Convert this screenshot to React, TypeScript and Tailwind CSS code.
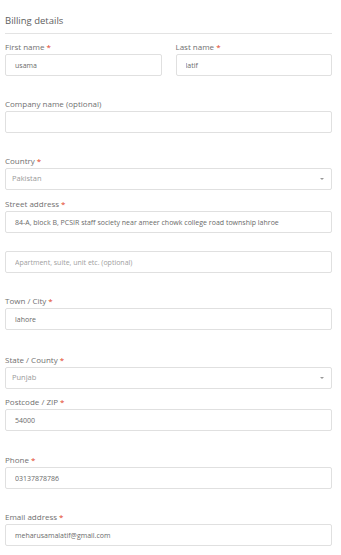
import { ReactNode } from "react";

// ─── Pieces ───────────────────────────────────────────────────────────────────

function Label({ children, required }: { children: ReactNode; required?: boolean }) {
  return (
    <label className="block h-[12px] mb-[1px] text-[8px] leading-[12px] text-[#707070] whitespace-nowrap">
      {children}
      {required && <span className="ml-[2px] text-[#e2401c]">*</span>}
    </label>
  );
}

function TextInput({ value, placeholder }: { value?: string; placeholder?: string }) {
  return (
    <input
      type="text"
      defaultValue={value}
      placeholder={placeholder}
      className="block w-full h-[22px] px-[9px] rounded-[2px] border border-[#e0e0e0] bg-white text-[7px] text-[#6a6a6a] placeholder:text-[#a0a0a0] outline-none"
    />
  );
}

function SelectBox({ value }: { value: string }) {
  return (
    <div className="flex items-center justify-between h-[22px] pl-[6px] pr-[7px] rounded-[2px] border border-[#e0e0e0] bg-white">
      <span className="text-[7.5px] text-[#9a9a9a]">{value}</span>
      <span className="w-0 h-0 border-l-[2px] border-r-[2px] border-t-[2px] border-l-transparent border-r-transparent border-t-[#999]" />
    </div>
  );
}

// ─── Page ─────────────────────────────────────────────────────────────────────

export default function App() {
  return (
    <div
      className="w-[341px] min-h-[555px] bg-white pl-[5px] pr-[9px] pt-[14px]"
      style={{ fontFamily: '"Open Sans", "Liberation Sans", sans-serif' }}
    >
      <h3 className="text-[9.5px] leading-[14px] text-[#5e5e5e] pb-[5px] border-b border-[#e3e3e3]">
        Billing details
      </h3>

      {/* Name row */}
      <div className="grid grid-cols-2 gap-[14px] mt-[7px]">
        <div>
          <Label required>First name</Label>
          <TextInput value="usama" />
        </div>
        <div>
          <Label required>Last name</Label>
          <TextInput value="latif" />
        </div>
      </div>

      <div className="mt-[22px]">
        <Label>Company name (optional)</Label>
        <TextInput />
      </div>

      <div className="mt-[22px]">
        <Label required>Country</Label>
        <SelectBox value="Pakistan" />
      </div>

      <div className="mt-[8px]">
        <Label required>Street address</Label>
        <TextInput value="84-A, block B, PCSIR staff society near ameer chowk college road township lahroe" />
      </div>

      <div className="mt-[18px]">
        <TextInput placeholder="Apartment, suite, unit etc. (optional)" />
      </div>

      <div className="mt-[22px]">
        <Label required>Town / City</Label>
        <TextInput value="lahore" />
      </div>

      <div className="mt-[24px]">
        <Label required>State / County</Label>
        <SelectBox value="Punjab" />
      </div>

      <div className="mt-[7px]">
        <Label required>Postcode / ZIP</Label>
        <TextInput value="54000" />
      </div>

      <div className="mt-[23px]">
        <Label required>Phone</Label>
        <TextInput value="03137878786" />
      </div>

      <div className="mt-[22px]">
        <Label required>Email address</Label>
        <TextInput value="meharusamalatif@gmail.com" />
      </div>
    </div>
  );
}
